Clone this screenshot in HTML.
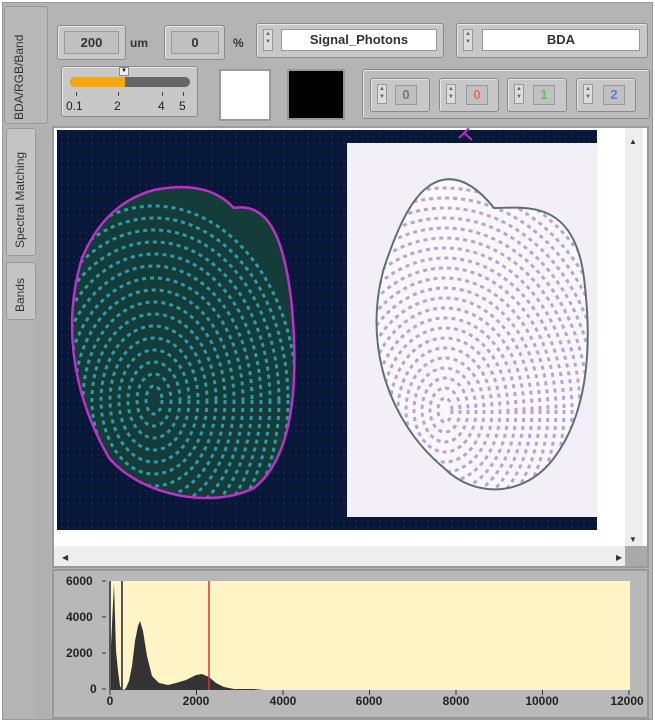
<!DOCTYPE html>
<html><head><meta charset="utf-8"><style>
*{box-sizing:border-box;margin:0;padding:0}
body{width:655px;height:728px;background:#fff;font-family:"Liberation Sans",sans-serif;position:relative;overflow:hidden}
.abs{position:absolute}
.panel{left:2px;top:2px;width:651px;height:718px;background:#b4b4b4;border:1px solid #999}
.box{position:absolute;background:#c8c8c8;border:1px solid #8a8a8a;border-radius:3px;box-shadow:inset 1px 1px 0 #e6e6e6}
.inner{position:absolute;background:#c0c0c0;border:1px solid #999;font-weight:bold;font-size:13px;text-align:center;color:#333}
.wf{background:#fff}
.tab{position:absolute;background:#c4c4c4;border:1px solid #999;border-radius:3px}
.vt{position:absolute;transform:rotate(-90deg);transform-origin:left top;font-size:12px;color:#333;white-space:nowrap}
.spin{position:absolute;width:10px;border:1px solid #999;background:#ddd;font-size:6px;color:#666;text-align:center;line-height:8px}
.ax{position:absolute;font-size:12px;color:#222;font-weight:bold}
.xl{position:absolute;top:694px;font-size:12px;color:#222;font-weight:bold;width:60px;margin-left:-30px;text-align:center}
</style></head><body>
<div class="abs panel"></div>
<div class="tab" style="left:4px;top:6px;width:44px;height:118px;background:#b8b8b8"></div>
<div class="vt" style="left:12px;top:120px">BDA/RGB/Band</div>
<div class="tab" style="left:6px;top:128px;width:30px;height:128px"></div>
<div class="vt" style="left:13px;top:248px">Spectral Matching</div>
<div class="tab" style="left:6px;top:262px;width:30px;height:58px"></div>
<div class="vt" style="left:13px;top:312px">Bands</div>
<div class="abs" style="left:36px;top:126px;width:14px;height:592px;background:#b0b0b0"></div>

<div class="box" style="left:57px;top:25px;width:69px;height:35px"></div>
<div class="inner" style="left:64px;top:31px;width:55px;height:23px;line-height:21px">200</div>
<div class="abs" style="left:130px;top:36px;font-size:12px;font-weight:bold;color:#333">um</div>
<div class="box" style="left:164px;top:25px;width:61px;height:35px"></div>
<div class="inner" style="left:171px;top:31px;width:48px;height:23px;line-height:21px">0</div>
<div class="abs" style="left:233px;top:36px;font-size:12px;font-weight:bold;color:#333">%</div>
<div class="box" style="left:256px;top:23px;width:188px;height:35px"></div>
<div class="spin" style="left:263px;top:29px;height:22px">▲<br>▼</div>
<div class="inner wf" style="left:281px;top:29px;width:156px;height:22px;line-height:20px">Signal_Photons</div>
<div class="box" style="left:456px;top:23px;width:192px;height:35px"></div>
<div class="spin" style="left:463px;top:29px;height:22px">▲<br>▼</div>
<div class="inner wf" style="left:482px;top:29px;width:158px;height:22px;line-height:20px">BDA</div>

<div class="box" style="left:61px;top:66px;width:137px;height:51px"></div>
<div class="abs" style="left:70px;top:77px;width:120px;height:10px;background:#666;border-radius:5px"></div>
<div class="abs" style="left:70px;top:77px;width:55px;height:10px;background:#f5a810;border-radius:5px 0 0 5px"></div>
<div class="abs" style="left:119px;top:67px;width:10px;height:9px;background:#eee;border:1px solid #888;font-size:6px;text-align:center;line-height:7px">▼</div>
<div class="abs" style="left:76px;top:92px;width:1px;height:4px;background:#444"></div>
<div class="abs" style="left:118px;top:92px;width:1px;height:4px;background:#444"></div>
<div class="abs" style="left:162px;top:92px;width:1px;height:4px;background:#444"></div>
<div class="abs" style="left:183px;top:92px;width:1px;height:4px;background:#444"></div>
<div class="ax" style="left:66px;top:99px;font-weight:normal">0.1</div>
<div class="ax" style="left:114px;top:99px;font-weight:normal">2</div>
<div class="ax" style="left:158px;top:99px;font-weight:normal">4</div>
<div class="ax" style="left:179px;top:99px;font-weight:normal">5</div>
<div class="abs" style="left:219px;top:69px;width:52px;height:52px;background:#fff;border:2px solid #999"></div>
<div class="abs" style="left:287px;top:69px;width:58px;height:51px;background:#000;border:2px solid #999"></div>
<div class="box" style="left:362px;top:69px;width:288px;height:50px;background:#bcbcbc"></div>
<div class="box" style="left:370px;top:78px;width:60px;height:34px"></div>
<div class="spin" style="left:377px;top:84px;height:20px">▲<br>▼</div><div class="inner" style="left:395px;top:85px;width:22px;height:20px;line-height:18px;color:#777">0</div>
<div class="box" style="left:439px;top:78px;width:60px;height:34px"></div>
<div class="spin" style="left:446px;top:84px;height:20px">▲<br>▼</div><div class="inner" style="left:466px;top:85px;width:22px;height:20px;line-height:18px;color:#e07060">0</div>
<div class="box" style="left:507px;top:78px;width:60px;height:34px"></div>
<div class="spin" style="left:514px;top:84px;height:20px">▲<br>▼</div><div class="inner" style="left:533px;top:85px;width:22px;height:20px;line-height:18px;color:#60c060">1</div>
<div class="box" style="left:576px;top:78px;width:60px;height:34px"></div>
<div class="spin" style="left:583px;top:84px;height:20px">▲<br>▼</div><div class="inner" style="left:603px;top:85px;width:22px;height:20px;line-height:18px;color:#6080d0">2</div>

<div class="abs" style="left:52px;top:126px;width:597px;height:442px;background:#fff;border:2px solid #999"></div>
<svg class="abs" style="left:54px;top:128px" width="593" height="438">
<defs>
<pattern id="n" width="6" height="6" patternUnits="userSpaceOnUse"><rect width="6" height="6" fill="#07163a"/><rect x="1" y="2" width="2" height="2" fill="#0d2a30"/></pattern>
<clipPath id="c1"><path d="M100,62 C150,52 170,70 180,80 C210,75 230,100 238,180 C245,260 238,330 200,360 C160,380 90,370 55,330 C15,260 10,190 28,130 C45,90 70,70 100,62 Z"/></clipPath>
<clipPath id="c2"><path d="M380,55 C400,45 420,55 440,80 C470,80 520,70 530,150 C540,230 530,290 500,330 C470,370 420,370 390,340 C330,290 310,210 330,140 C345,95 360,65 380,55 Z"/></clipPath>
</defs>
<rect x="3" y="2" width="540" height="400" fill="url(#n)"/>
<path d="M415,0 L405,10 M410,5 L418,12" stroke="#d020d0" stroke-width="2"/>
<g clip-path="url(#c1)">
<rect x="0" y="40" width="260" height="350" fill="#143c38"/>
<g transform="translate(100,272)" fill="none" stroke="#36c4e0" stroke-width="3" stroke-dasharray="4 4" opacity="0.7">
<ellipse rx="8" ry="14"/><ellipse rx="17" ry="26"/><ellipse rx="26" ry="38"/><ellipse rx="35" ry="50"/><ellipse rx="44" ry="62"/>
<ellipse rx="53" ry="74"/><ellipse rx="62" ry="86"/><ellipse rx="71" ry="98"/><ellipse rx="80" ry="110"/><ellipse rx="89" ry="122"/>
<ellipse rx="98" ry="134"/><ellipse rx="107" ry="146"/><ellipse rx="116" ry="158"/><ellipse rx="125" ry="170"/><ellipse rx="134" ry="182"/><ellipse rx="143" ry="194"/>
</g>
</g>
<path d="M100,62 C150,52 170,70 180,80 C210,75 230,100 238,180 C245,260 238,330 200,360 C160,380 90,370 55,330 C15,260 10,190 28,130 C45,90 70,70 100,62 Z" fill="none" stroke="#c030c8" stroke-width="2.5"/>
<rect x="293" y="15" width="250" height="374" fill="#f3eff6"/>
<g clip-path="url(#c2)">
<rect x="300" y="40" width="250" height="340" fill="#faf7fd"/>
<g transform="translate(391,282)" fill="none" stroke="#8a68cc" stroke-width="3" stroke-dasharray="4 4" opacity="0.6">
<ellipse rx="7" ry="12"/><ellipse rx="15" ry="22"/><ellipse rx="23" ry="32"/><ellipse rx="31" ry="42"/><ellipse rx="39" ry="52"/>
<ellipse rx="47" ry="62"/><ellipse rx="55" ry="72"/><ellipse rx="63" ry="82"/><ellipse rx="71" ry="92"/><ellipse rx="79" ry="102"/>
<ellipse rx="87" ry="112"/><ellipse rx="95" ry="122"/><ellipse rx="103" ry="132"/><ellipse rx="111" ry="142"/><ellipse rx="119" ry="152"/>
<ellipse rx="127" ry="162"/><ellipse rx="135" ry="172"/><ellipse rx="143" ry="182"/><ellipse rx="151" ry="192"/><ellipse rx="159" ry="202"/><ellipse rx="167" ry="212"/><ellipse rx="175" ry="222"/><ellipse rx="183" ry="232"/>
</g>
</g>
<path d="M380,55 C400,45 420,55 440,80 C470,80 520,70 530,150 C540,230 530,290 500,330 C470,370 420,370 390,340 C330,290 310,210 330,140 C345,95 360,65 380,55 Z" fill="none" stroke="#607070" stroke-width="2"/>
<rect x="571" y="0" width="18" height="420" fill="#eee"/>
<text x="575" y="16" font-size="8" fill="#333">▲</text><text x="575" y="414" font-size="8" fill="#333">▼</text>
<rect x="0" y="418" width="571" height="20" fill="#eee"/>
<text x="8" y="432" font-size="8" fill="#333">◀</text><text x="562" y="432" font-size="8" fill="#333">▶</text>
<rect x="571" y="418" width="22" height="20" fill="#aaa"/>
</svg>

<div class="abs" style="left:52px;top:569px;width:597px;height:150px;background:#b8b8b8;border:2px solid #999"></div>
<svg class="abs" style="left:54px;top:571px" width="593" height="146">
<rect x="56" y="10" width="520" height="109" fill="#fff4c6"/>
<path d="M56,119 L56,10" stroke="#333"/>
<path d="M56,119 L57,75 L60,12 L62,80 L64,100 L66,115 L69,120 L72,117 L75,110 L78,95 L81,70 L84,55 L86,50 L89,60 L93,85 L98,105 L105,112 L114,114 L122,112 L132,109 L142,104 L148,103 L155,106 L162,112 L170,116 L180,118 L200,118 L210,119 L506,119 L56,119 Z" fill="#333"/>
<rect x="55" y="10" width="2" height="109" fill="#555"/><rect x="67" y="10" width="2" height="109" fill="#555"/>
<path d="M155,10 L155,119" stroke="#e03030" stroke-width="1.5"/>
<g stroke="#333"><path d="M56,119 L56,124 M142.5,119 L142.5,124 M229,119 L229,124 M315.5,119 L315.5,124 M402,119 L402,124 M488.5,119 L488.5,124 M575,119 L575,124 M48,10 L52,10 M48,46 L52,46 M48,82 L52,82 M48,118 L52,118"/></g>
</svg>
<div class="ax" style="left:66px;top:574px">6000</div>
<div class="ax" style="left:66px;top:610px">4000</div>
<div class="ax" style="left:66px;top:646px">2000</div>
<div class="ax" style="left:90px;top:682px">0</div>
<div class="xl" style="left:110px">0</div>
<div class="xl" style="left:196px">2000</div>
<div class="xl" style="left:283px">4000</div>
<div class="xl" style="left:369px">6000</div>
<div class="xl" style="left:456px">8000</div>
<div class="xl" style="left:542px">10000</div>
<div class="xl" style="left:627px">12000</div>
</body></html>
